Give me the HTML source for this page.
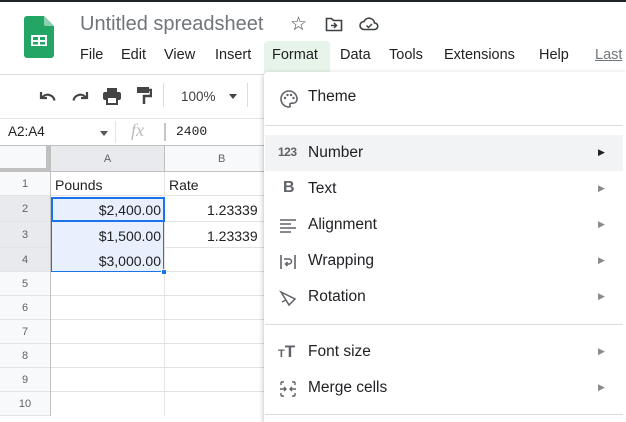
<!DOCTYPE html><html><head><style>
*{margin:0;padding:0;box-sizing:border-box}
body{width:626px;height:416px;overflow:hidden;background:#fff;font-family:"Liberation Sans",Arial,sans-serif;position:relative;color:#202124}
.a{position:absolute}
.menu span{position:absolute;top:47px;font-size:14.5px;color:#202124}
.rh{position:absolute;left:0;width:50px;text-align:center;font-size:11px;color:#5f6368;border-bottom:1px solid #e2e3e3;background:#f8f9fa}
.hl{position:absolute;left:0;width:626px;height:1px;background:#e2e3e3}
.mi{position:absolute;left:265px;width:358px;height:36px;font-size:15.5px;color:#202124}
.mi .t{position:absolute;left:43px;top:9px}
.mi .ar{position:absolute;left:333px;top:12px;font-size:9px;color:#8a8a8a}
.mi svg{position:absolute;left:14px;top:10px}
</style></head><body>
<div class="a" style="left:0;top:0;width:626px;height:2px;background:#1f2428"></div>
<svg class="a" style="left:24px;top:16px" width="30" height="42" viewBox="0 0 30 42"><path d="M3 0h17l10 10v29a3 3 0 0 1-3 3H3a3 3 0 0 1-3-3V3a3 3 0 0 1 3-3z" fill="#23a566"/><path d="M20 0l10 10h-8a2 2 0 0 1-2-2z" fill="#8ed1b1"/><rect x="7" y="19" width="16" height="11" fill="#fff"/><rect x="9" y="21" width="5" height="3" fill="#23a566"/><rect x="16" y="21" width="5" height="3" fill="#23a566"/><rect x="9" y="26" width="5" height="2.5" fill="#23a566"/><rect x="16" y="26" width="5" height="2.5" fill="#23a566"/></svg>
<div class="a" style="left:80px;top:13px;font-size:20px;color:#70757a">Untitled spreadsheet</div>
<div class="a" style="left:290px;top:13px;font-size:19px;color:#3c4043">☆</div>
<svg class="a" style="left:325px;top:17px" width="18" height="15" viewBox="0 0 18 15"><path d="M1.5 1.5h5l2 2h8v10h-15z" fill="none" stroke="#3c4043" stroke-width="1.6"/><path d="M6 8.5h5M9 6l2.5 2.5L9 11" fill="none" stroke="#3c4043" stroke-width="1.5"/></svg>
<svg class="a" style="left:359px;top:17px" width="20" height="14" viewBox="0 0 20 14"><path d="M5 12.5a4 4 0 0 1 0-8 5.5 5.5 0 0 1 10.5 1.5 3.2 3.2 0 0 1 0 6.5z" fill="none" stroke="#3c4043" stroke-width="1.6"/><path d="M7.5 8.5l2 2 3.5-3.5" fill="none" stroke="#3c4043" stroke-width="1.4"/></svg>
<div class="a" style="left:264px;top:41px;width:66px;height:32px;background:#e6f4ea;border-radius:4px 4px 0 0"></div>
<div class="menu"><span style="left:80px">File</span><span style="left:121px">Edit</span><span style="left:164px">View</span><span style="left:215px">Insert</span><span style="left:272px">Format</span><span style="left:340px">Data</span><span style="left:389px">Tools</span><span style="left:444px">Extensions</span><span style="left:539px">Help</span><span style="left:595px;color:#70757a;text-decoration:underline">Last</span></div>
<div class="hl" style="top:74px;background:#dadce0"></div>
<svg class="a" style="left:38px;top:89px" width="20" height="14" viewBox="0 0 20 14"><path d="M3 3v6h6" fill="none" stroke="#444" stroke-width="2.2"/><path d="M4 8.5a7 7 0 0 1 12.5 3" fill="none" stroke="#444" stroke-width="2.2"/></svg>
<svg class="a" style="left:70px;top:89px" width="20" height="14" viewBox="0 0 20 14"><path d="M17 3v6h-6" fill="none" stroke="#444" stroke-width="2.2"/><path d="M16 8.5a7 7 0 0 0-12.5 3" fill="none" stroke="#444" stroke-width="2.2"/></svg>
<svg class="a" style="left:102px;top:87px" width="20" height="18" viewBox="0 0 20 18"><rect x="5" y="1" width="10" height="4" fill="#444"/><rect x="1" y="5" width="18" height="8" rx="2" fill="#444"/><rect x="5" y="10" width="10" height="7" fill="#fff" stroke="#444" stroke-width="2"/></svg>
<svg class="a" style="left:136px;top:86px" width="16" height="20" viewBox="0 0 16 20"><rect x="1" y="1" width="12" height="6" fill="#444"/><path d="M13 4h2v6H8v8" fill="none" stroke="#444" stroke-width="2.5"/></svg>
<div class="a" style="left:163px;top:83px;width:1px;height:24px;background:#dadce0"></div>
<div class="a" style="left:181px;top:89px;font-size:13.5px;color:#3c4043">100%</div>
<div class="a" style="left:229px;top:94px;border:4.5px solid transparent;border-top:5px solid #444"></div>
<div class="a" style="left:247px;top:83px;width:1px;height:24px;background:#dadce0"></div>
<div class="hl" style="top:118px"></div>
<div class="a" style="left:8px;top:124px;font-size:13.5px">A2:A4</div>
<div class="a" style="left:100px;top:131px;border:4px solid transparent;border-top:5px solid #555"></div>
<div class="a" style="left:115px;top:121px;width:1px;height:22px;background:#e2e3e3"></div>
<div class="a" style="left:131px;top:120px;font-size:18px;font-style:italic;font-family:'Liberation Serif',serif;color:#bbb">fx</div>
<div class="a" style="left:164px;top:123px;width:2px;height:18px;background:#c6c6c6"></div>
<div class="a" style="left:176px;top:124px;font-size:13px;font-family:'Liberation Mono',monospace;color:#202124">2400</div>
<div class="hl" style="top:145px;background:#c0c0c0"></div>
<div class="a" style="left:0;top:146px;width:50px;height:26px;background:#f8f9fa;border-right:4px solid #c0c0c0;border-bottom:4px solid #c0c0c0"></div>
<div class="a" style="left:50px;top:146px;width:114px;height:26px;background:#e8eaed;border-left:1px solid #c0c0c0;text-align:center;font-size:11px;color:#5f6368;padding-top:7px;border-bottom:1px solid #c0c0c0">A</div>
<div class="a" style="left:164px;top:146px;width:110px;height:26px;background:#f8f9fa;border-left:1px solid #c0c0c0;font-size:11px;color:#5f6368;padding:7px 0 0 53px;border-bottom:1px solid #c0c0c0">B</div>
<div class="rh" style="top:172px;height:24px;padding-top:6px">1</div>
<div class="rh" style="top:196px;height:26px;padding-top:7px;background:#e8eaed">2</div>
<div class="rh" style="top:222px;height:26px;padding-top:7px;background:#e8eaed">3</div>
<div class="rh" style="top:248px;height:24px;padding-top:6px;background:#e8eaed">4</div>
<div class="rh" style="top:272px;height:24px;padding-top:6px">5</div>
<div class="rh" style="top:296px;height:24px;padding-top:6px">6</div>
<div class="rh" style="top:320px;height:24px;padding-top:6px">7</div>
<div class="rh" style="top:344px;height:24px;padding-top:6px">8</div>
<div class="rh" style="top:368px;height:24px;padding-top:6px">9</div>
<div class="rh" style="top:392px;height:24px;padding-top:6px">10</div>
<div class="a" style="left:50px;top:172px;width:1px;height:244px;background:#c0c0c0"></div>
<div class="a" style="left:164px;top:172px;width:1px;height:244px;background:#e2e3e3"></div>
<div class="a" style="left:51px;top:195px;width:215px;height:1px;background:#e2e3e3"></div>
<div class="a" style="left:51px;top:221px;width:215px;height:1px;background:#e2e3e3"></div>
<div class="a" style="left:51px;top:247px;width:215px;height:1px;background:#e2e3e3"></div>
<div class="a" style="left:51px;top:271px;width:215px;height:1px;background:#e2e3e3"></div>
<div class="a" style="left:51px;top:295px;width:215px;height:1px;background:#e2e3e3"></div>
<div class="a" style="left:51px;top:319px;width:215px;height:1px;background:#e2e3e3"></div>
<div class="a" style="left:51px;top:343px;width:215px;height:1px;background:#e2e3e3"></div>
<div class="a" style="left:51px;top:367px;width:215px;height:1px;background:#e2e3e3"></div>
<div class="a" style="left:51px;top:391px;width:215px;height:1px;background:#e2e3e3"></div>
<div class="a" style="left:51px;top:197px;width:113px;height:75px;background:#e8f0fe;border:1px solid #1a73e8;border-top:none"></div>
<div class="a" style="left:51px;top:197px;width:114px;height:25px;border:2px solid #1a73e8"></div>
<div class="a" style="left:161px;top:269px;width:6px;height:6px;background:#1a73e8;border:1px solid #fff"></div>
<div class="a" style="left:55px;top:177px;font-size:14px">Pounds</div>
<div class="a" style="left:169px;top:177px;font-size:14px">Rate</div>
<div class="a" style="left:51px;top:202px;width:110px;text-align:right;font-size:14px">$2,400.00</div>
<div class="a" style="left:51px;top:228px;width:110px;text-align:right;font-size:14px">$1,500.00</div>
<div class="a" style="left:51px;top:253px;width:110px;text-align:right;font-size:14px">$3,000.00</div>
<div class="a" style="left:207px;top:202px;font-size:14px">1.23339</div>
<div class="a" style="left:207px;top:228px;font-size:14px">1.23339</div>
<div class="a" style="left:264px;top:72px;width:362px;height:350px;background:#fff;box-shadow:0 2px 6px rgba(0,0,0,.3);border-radius:4px 0 0 0"></div>
<div class="mi" style="top:79px"><svg width="20" height="20" viewBox="0 0 20 20"><path d="M10 2a8 8 0 0 0 0 16c1.2 0 1.5-.8 1-1.6-.6-1 0-2.2 1.2-2.2H14a4 4 0 0 0 4-4C18 5.5 14.4 2 10 2z" fill="none" stroke="#5f6368" stroke-width="1.6"/><circle cx="6" cy="9" r="1.2" fill="#5f6368"/><circle cx="8.5" cy="6" r="1.2" fill="#5f6368"/><circle cx="12" cy="6" r="1.2" fill="#5f6368"/><circle cx="14.5" cy="9" r="1.2" fill="#5f6368"/></svg><span class="t">Theme</span></div>
<div class="a" style="left:265px;top:125px;width:358px;height:1px;background:#dadce0"></div>
<div class="mi" style="top:135px;background:#f1f3f4"><span class="a" style="left:13px;top:10px;font-size:12px;font-weight:bold;color:#5f6368;letter-spacing:-.5px">123</span><span class="t">Number</span><span class="ar" style="color:#202124">▶</span></div>
<div class="mi" style="top:171px"><span class="a" style="left:18px;top:8px;font-size:16px;font-weight:bold;color:#5f6368">B</span><span class="t">Text</span><span class="ar">▶</span></div>
<div class="mi" style="top:207px"><svg width="18" height="18" viewBox="0 0 18 18"><path d="M1 3h16M1 7h11M1 11h16M1 15h11" stroke="#5f6368" stroke-width="1.6"/></svg><span class="t">Alignment</span><span class="ar">▶</span></div>
<div class="mi" style="top:243px"><svg width="18" height="18" viewBox="0 0 18 18"><path d="M2 2v14M16 2v14" stroke="#5f6368" stroke-width="1.6"/><path d="M5 6h5a2.5 2.5 0 0 1 0 5H7M8.5 9L6.5 11l2 2" fill="none" stroke="#5f6368" stroke-width="1.5"/></svg><span class="t">Wrapping</span><span class="ar">▶</span></div>
<div class="mi" style="top:279px"><svg width="18" height="18" viewBox="0 0 18 18"><path d="M2 3l14 7-6 6z" fill="none" stroke="#5f6368" stroke-width="1.5"/><path d="M3 13l4-2" stroke="#5f6368" stroke-width="1.5"/></svg><span class="t">Rotation</span><span class="ar">▶</span></div>
<div class="a" style="left:265px;top:324px;width:358px;height:1px;background:#dadce0"></div>
<div class="mi" style="top:334px"><span class="a" style="left:13px;top:8px;font-size:17px;font-weight:bold;color:#5f6368"><span style="font-size:11px">T</span>T</span><span class="t">Font size</span><span class="ar">▶</span></div>
<div class="mi" style="top:370px"><svg width="18" height="18" viewBox="0 0 18 18"><path d="M1 9h6M5 7l2 2-2 2M17 9h-6M13 7l-2 2 2 2M2 2h3M13 2h3M2 16h3M13 16h3M2 2v3M16 2v3M2 13v3M16 13v3" fill="none" stroke="#5f6368" stroke-width="1.4"/></svg><span class="t">Merge cells</span><span class="ar">▶</span></div>
<div class="a" style="left:265px;top:414px;width:358px;height:1px;background:#dadce0"></div>
</body></html>
